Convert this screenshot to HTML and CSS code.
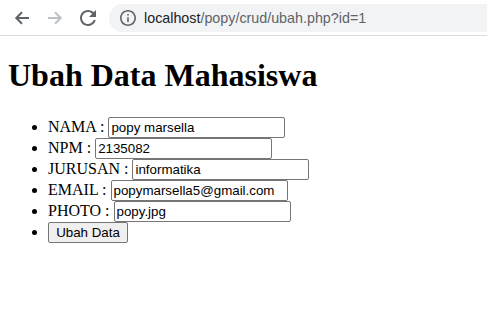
FILE: index.html
```html
<!DOCTYPE html>
<html>
<head>
<meta charset="utf-8">
<title>Ubah Data Mahasiswa</title>
<link rel="stylesheet" href="styles.css">
</head>
<body>
<header class="toolbar">
  <div class="nav">
    <span class="navbtn">
      <svg width="16" height="16" viewBox="0 0 16 16"><path d="M15 8H2.5M8 2.3L2.3 8 8 13.7" fill="none" stroke="#5f6368" stroke-width="2"/></svg>
    </span>
    <span class="navbtn">
      <svg width="16" height="16" viewBox="0 0 16 16"><path d="M1 8h12.5M8 2.3L13.7 8 8 13.7" fill="none" stroke="#bdc1c6" stroke-width="2"/></svg>
    </span>
    <span class="navbtn">
      <svg width="16" height="16" viewBox="4 4 16 16"><path d="M17.65 6.35C16.2 4.9 14.21 4 12 4c-4.42 0-7.99 3.58-7.99 8s3.57 8 7.99 8c3.730 0 6.84-2.55 7.73-6h-2.080c-.82 2.330-3.04 4-5.65 4-3.31 0-6-2.690-6-6s2.69-6 6-6c1.66 0 3.14.69 4.22 1.78L13 11h7V4l-2.35 2.35z" fill="#5f6368"/></svg>
    </span>
  </div>
  <div class="omnibox">
    <svg class="info" width="16" height="16" viewBox="2 2 20 20"><path d="M11 7h2v2h-2zm0 4h2v6h-2zm1-9C6.48 2 2 6.48 2 12s4.48 10 10 10 10-4.48 10-10S17.52 2 12 2zm0 18c-4.41 0-8-3.590-8-8s3.590-8 8-8 8 3.590 8 8-3.590 8-8 8z" fill="#5f6368"/></svg>
    <span class="url"><span class="host">localhost</span>/popy/crud/ubah.php?id=1</span>
  </div>
</header>
<main class="page">
  <h1>Ubah Data Mahasiswa</h1>
  <form>
    <ul>
      <li>NAMA : <input type="text" value="popy marsella"></li>
      <li>NPM : <input type="text" value="2135082"></li>
      <li>JURUSAN : <input type="text" value="informatika"></li>
      <li>EMAIL : <input type="text" value="popymarsella5@gmail.com"></li>
      <li>PHOTO : <input type="text" value="popy.jpg"></li>
      <li><button type="button">Ubah Data</button></li>
    </ul>
  </form>
</main>
</body>
</html>
```
FILE: styles.css
```css
html, body {
  margin: 0;
  padding: 0;
  background: #ffffff;
}
body {
  font-family: "Liberation Serif", "Times New Roman", serif;
  font-size: 16px;
  color: #000;
}
.toolbar {
  height: 35px;
  border-bottom: 1px solid #dadce0;
  display: flex;
  align-items: center;
  background: #ffffff;
}
.nav {
  display: flex;
  padding-left: 6px;
  gap: 0;
}
.navbtn {
  width: 32px;
  height: 28px;
  display: flex;
  align-items: center;
  justify-content: center;
  margin-right: 1px;
}
.omnibox {
  margin-left: 4px;
  flex: 1;
  height: 28px;
  background: #f1f3f4;
  border-radius: 14px 0 0 14px;
  display: flex;
  align-items: center;
  padding-left: 11px;
}
.info {
  margin-right: 8px;
}
.url {
  font-family: "Liberation Sans", Arial, sans-serif;
  font-size: 14.3px;
  color: #5f6368;
  letter-spacing: 0;
}
.host {
  color: #202124;
}
.page {
  margin: 8px;
}
h1 {
  font-size: 32px;
  font-weight: bold;
  margin: 21.44px 0;
}
ul {
  margin: 16px 0;
  padding-left: 40px;
}
li {
  line-height: 21px;
  height: 21px;
}
input {
  font-family: "Liberation Sans", Arial, sans-serif;
  font-size: 13.333px;
  width: 177px;
  height: 21px;
  box-sizing: border-box;
  padding: 1px 2px;
  border: 1px solid #767676;
  border-radius: 2px;
  color: #000;
  background: #fff;
  margin: 0;
  vertical-align: baseline;
}
button {
  font-family: "Liberation Sans", Arial, sans-serif;
  font-size: 13.333px;
  height: 21px;
  width: 80px;
  padding: 1px 6px;
  border: 1px solid #767676;
  border-radius: 2px;
  background: #efefef;
  color: #000;
  margin: 0;
}
```
